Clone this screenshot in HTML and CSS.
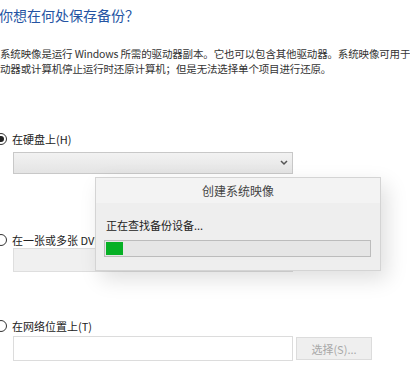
FILE: index.html
```html
<!DOCTYPE html>
<html lang="zh-CN">
<head>
    <meta charset="UTF-8">
    <title>创建系统映像</title>
    <link rel="stylesheet" href="styles.css">
</head>
<body>
    <div class="page">
        <h1 class="title">你想在何处保存备份？</h1>
        <p class="desc">
            <span class="line">系统映像是运行 Windows 所需的驱动器副本。它也可以包含其他驱动器。系统映像可用于</span>
            <span class="line">动器或计算机停止运行时还原计算机；但是无法选择单个项目进行还原。</span>
        </p>

        <div class="option first">
            <label class="radio-row"><span class="radio checked"></span>在硬盘上(H)</label>
            <div class="select">
                <svg class="chevron" width="8" height="6" viewBox="0 0 8 6"><polyline points="1,1 4,4 7,1" fill="none" stroke="#555" stroke-width="1.5"/></svg>
            </div>
        </div>

        <div class="option second">
            <label class="radio-row"><span class="radio"></span>在一张或多张 DVD 上(D)</label>
            <div class="select disabled"></div>
        </div>

        <div class="option third">
            <label class="radio-row"><span class="radio"></span>在网络位置上(T)</label>
            <div class="input-row">
                <div class="text-input"></div>
                <button class="btn" disabled>选择(S)...</button>
            </div>
        </div>
    </div>

    <div class="dialog">
        <div class="dialog-title">创建系统映像</div>
        <div class="dialog-body">
            <p class="status">正在查找备份设备...</p>
            <div class="progress"><div class="progress-fill" style="width: 17px"></div></div>
        </div>
    </div>
</body>
</html>
```

FILE: styles.css
```css
body {
    margin: 0;
    background-color: #fff;
    font-family: "Noto Sans CJK SC", "Noto Sans", sans-serif;
    color: #333;
    overflow: hidden;
}
.page {
    margin-left: -5px;
    width: 430px;
}
.title {
    margin: 5px 0 0 4px;
    font-size: 14px;
    line-height: 20px;
    font-weight: normal;
    color: #2554a3;
}
.desc {
    margin: 21px 0 0 5px;
    font-size: 10.5px;
    line-height: 15px;
    letter-spacing: -0.15px;
}
.desc .line {
    display: block;
    white-space: nowrap;
}
.radio-row {
    display: flex;
    align-items: center;
    gap: 5px;
    font-size: 11px;
    line-height: 16px;
    color: #222;
}
.radio {
    width: 10px;
    height: 10px;
    border: 1px solid #333;
    border-radius: 50%;
    display: flex;
    align-items: center;
    justify-content: center;
    background: #fff;
}
.radio.checked::after {
    content: "";
    width: 6px;
    height: 6px;
    border-radius: 50%;
    background: #222;
}
.option.first {
    margin-top: 55px;
}
.option.first .select {
    margin-top: 5px;
}
.option.second {
    margin-top: 58px;
}
.option.second .select {
    margin-top: 0;
    height: 22px;
}
.option.third {
    margin-top: 46px;
}
.select {
    margin-left: 18px;
    width: 278px;
    height: 20px;
    border: 1px solid #c8c8c8;
    background: linear-gradient(#f2f2f2, #e4e4e4);
    display: flex;
    align-items: center;
    justify-content: flex-end;
}
.select.disabled {
    background: #f0f0f0;
    border-color: #dedede;
}
.chevron {
    margin-right: 4px;
}
.input-row {
    margin: 2px 0 0 18px;
    display: flex;
    gap: 3px;
    align-items: flex-start;
}
.text-input {
    width: 278px;
    height: 23px;
    border: 1px solid #dcdcdc;
    background: #fff;
}
.btn {
    margin-top: 1px;
    width: 76px;
    height: 23px;
    padding: 0;
    border: 1px solid #dcdcdc;
    background: #efefef;
    color: #a8a8a8;
    font-family: inherit;
    font-size: 11px;
}
.dialog {
    position: absolute;
    left: 95px;
    top: 177px;
    width: 284px;
    height: 92px;
    border: 1px solid #d4d4d4;
    background: #eeeeee;
    box-shadow: 6px 8px 20px rgba(0, 0, 0, 0.13);
}
.dialog-title {
    height: 25px;
    line-height: 25px;
    text-align: center;
    font-size: 12px;
    color: #444;
    background: #f3f3f3;
}
.dialog-body {
    padding: 14px 9px 0 8px;
}
.status {
    margin: 0 0 0 2px;
    font-size: 11px;
    line-height: 16px;
    color: #222;
}
.progress {
    margin-top: 7px;
    height: 15px;
    border: 1px solid #bcbcbc;
    background: #e6e6e6;
    padding: 0 1px;
    display: flex;
    align-items: center;
}
.progress-fill {
    height: 13px;
    background: #06b025;
}
```
